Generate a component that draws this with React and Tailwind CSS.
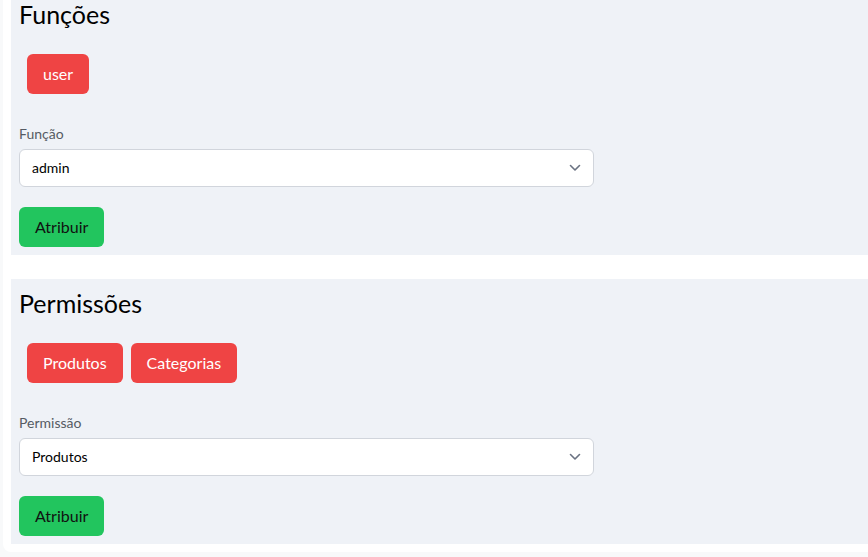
const SECTIONS = [
  { title: 'Funções', badges: ['user'], label: 'Função', value: 'admin' },
  { title: 'Permissões', badges: ['Produtos', 'Categorias'], label: 'Permissão', value: 'Produtos' },
]

function Chevron() {
  return (
    <svg width="12" height="8" viewBox="0 0 12 8" fill="none" className="text-gray-500">
      <path d="M1.5 1.5L6 6l4.5-4.5" stroke="currentColor" strokeWidth="1.6" strokeLinecap="round" strokeLinejoin="round" />
    </svg>
  )
}

function Section({ title, badges, label, value }) {
  return (
    <div className="bg-[#eff2f7] p-2">
      <h2 className="text-[25px] leading-8 text-black">{title}</h2>
      <div className="flex gap-2 p-2 mt-4 mb-[22px]">
        {badges.map((b) => (
          <span key={b} className="bg-[#ef4444] text-white rounded-md px-4 py-2 text-base leading-6">{b}</span>
        ))}
      </div>
      <label className="block text-sm text-[#555b63] mb-[5px]">{label}</label>
      <div className="w-[575px] h-[38px] bg-white border border-gray-300 rounded-md flex items-center justify-between pl-3 pr-3 text-sm text-black">
        <span>{value}</span>
        <Chevron />
      </div>
      <button className="mt-5 bg-[#22c55e] text-[#111] rounded-md px-4 py-2 text-base leading-6">Atribuir</button>
    </div>
  )
}

export default function App() {
  return (
    <div className="min-h-screen bg-[#f8f9fa] overflow-hidden font-['Lato','Noto_Sans',sans-serif]">
      <div className="ml-[3px] w-[calc(100%+20px)] -mt-[18px] bg-white rounded-lg p-2 flex flex-col gap-6">
        {SECTIONS.map((s) => (
          <Section key={s.title} {...s} />
        ))}
      </div>
    </div>
  )
}
